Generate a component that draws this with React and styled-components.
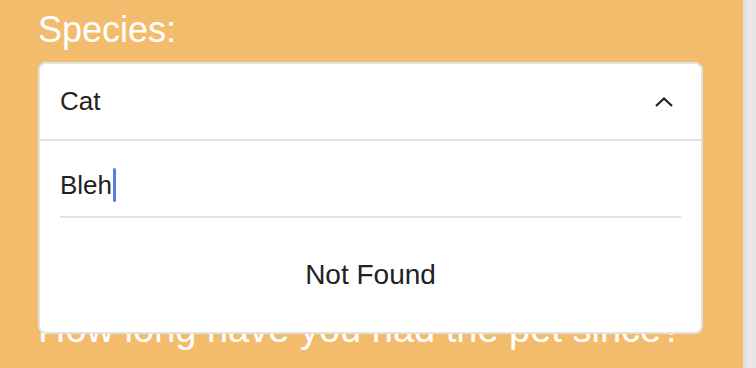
import React from 'react';
import styled, { createGlobalStyle } from 'styled-components';

const GlobalStyle = createGlobalStyle`
    html, body {
        margin: 0;
        padding: 0;
        height: 100%;
        overflow: hidden;
    }
    #root {
        height: 100%;
    }
`

const Page = styled.div`
    display: flex;
    height: 100vh;
    font-family: 'Liberation Sans', Arial, sans-serif;
`

const Form = styled.div`
    flex: 1;
    background-color: #f2bc6c;
    padding: 9px 40px 0 38px;
    overflow: hidden;
`

const Scrollbar = styled.div`
    width: 13px;
    background: linear-gradient(to right, #dcdcdc, #e8e8e8 40%, #e6e6e6);
`

const Label = styled.div`
    color: #ffffff;
    font-size: ${props => props.$size || 36}px;
    line-height: 1.14;
    white-space: nowrap;
    margin-top: ${props => props.$top || 0}px;
`

const SelectWrapper = styled.div`
    position: relative;
    height: 79px;
    margin-top: 12px;
`

const Card = styled.div`
    position: absolute;
    top: 0;
    left: 0;
    right: 0;
    z-index: 2;
    background: #ffffff;
    border: 2px solid #e2e2e2;
    border-radius: 8px;
    color: #222222;
`

const Header = styled.div`
    display: flex;
    align-items: center;
    justify-content: space-between;
    height: 75px;
    padding: 0 28px 0 20px;
    border-bottom: 2px solid #e2e2e2;
    font-size: 26px;
`

const Search = styled.div`
    padding: 26px 20px 0 20px;
`

const InputBox = styled.div`
    display: flex;
    align-items: center;
    height: 36px;
    padding-bottom: 13px;
    border-bottom: 2px solid #e2e2e2;
    font-size: 26px;
`

const Caret = styled.span`
    display: inline-block;
    width: 3px;
    height: 34px;
    margin-left: 1px;
    border-radius: 2px;
    background: #5b7ee6;
`

const Empty = styled.div`
    display: flex;
    align-items: center;
    justify-content: center;
    height: 114px;
    font-size: 28px;
`

const Chevron = () => (
    <svg width="18" height="10" viewBox="0 0 18 10">
        <polyline points="1,9 9,1.5 17,9" fill="none" stroke="#222" strokeWidth="2.2" />
    </svg>
)

export default function App() {
    return (
        <Page>
            <GlobalStyle />
            <Form>
                <Label>Species:</Label>
                <SelectWrapper>
                    <Card>
                        <Header>
                            <span>Cat</span>
                            <Chevron />
                        </Header>
                        <Search>
                            <InputBox>
                                Bleh<Caret />
                            </InputBox>
                        </Search>
                        <Empty>Not Found</Empty>
                    </Card>
                </SelectWrapper>
                <Label $top={167} $size={38}>How long have you had the pet since?</Label>
            </Form>
            <Scrollbar />
        </Page>
    )
}
